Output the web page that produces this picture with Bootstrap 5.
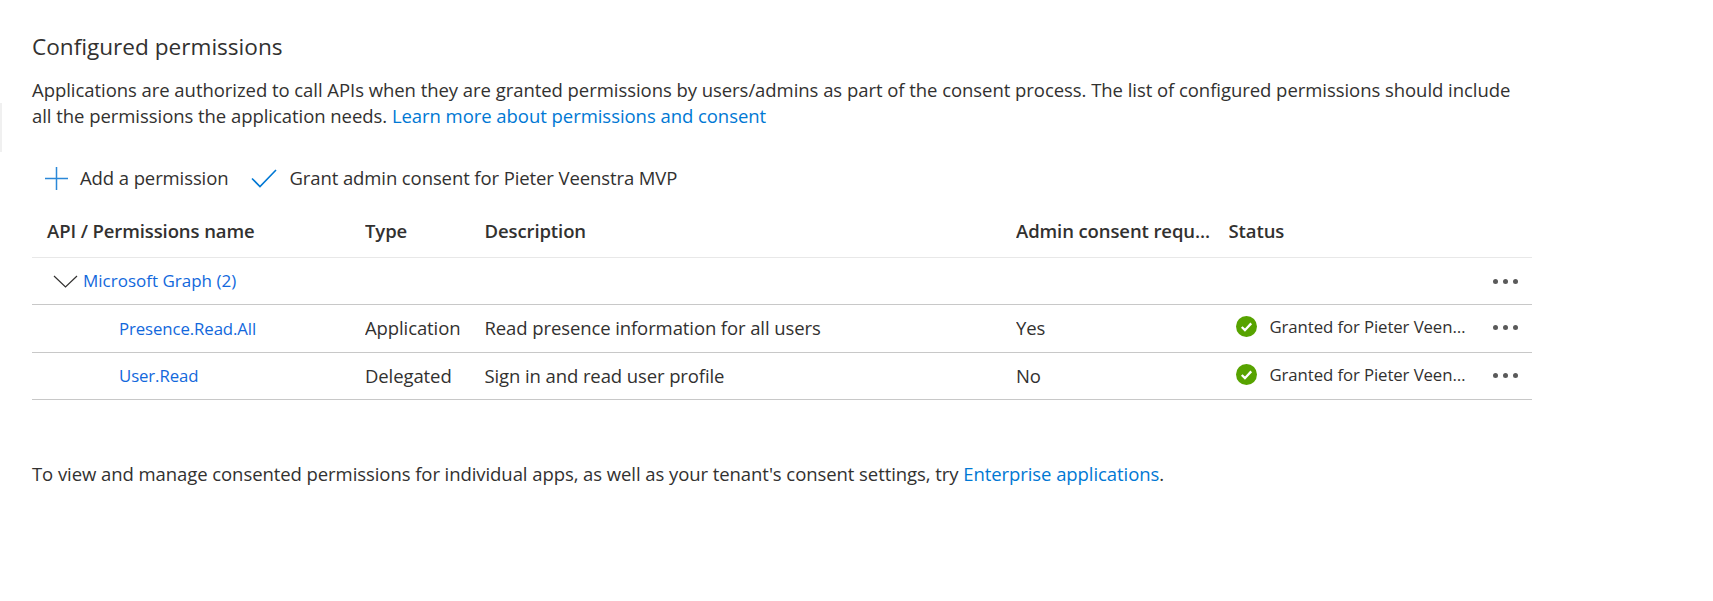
<!DOCTYPE html>
<html lang="en">
<head>
  <meta charset="UTF-8">
  <title>Configured permissions</title>
  <link href="https://cdn.jsdelivr.net/npm/bootstrap@5.3.0/dist/css/bootstrap.min.css" rel="stylesheet">
  <style>
    body { font-family: "Open Sans", "Noto Sans", sans-serif; font-size: 18.500px; color: #323130; background: #fff; overflow: hidden; }
    a { color: #0078d4; text-decoration: none; }
    .page-wrap { width: 1500px; margin-left: 32px; padding-top: 31px; }
    .page-title { font-size: 22.600px; font-weight: 400; line-height: 32px; margin: 0 0 14px; }
    .intro { line-height: 25.500px; margin: 0 0 28px; letter-spacing: -.05px; }
    .cmd-bar { height: 44px; padding-left: 13px; margin-bottom: 5px; letter-spacing: -.1px; }
    .cmd-item { gap: 12px; margin-right: 23px; }
    .perm-row { display: grid; grid-template-columns: 333px 119.500px 531.500px 212.500px 1fr 40px; align-items: center; letter-spacing: -.1px; }
    .perm-row > div { white-space: nowrap; overflow: hidden; }
    .perm-head { height: 53px; font-weight: 600; border-bottom: 1px solid #e8e8e8; }
    .perm-head > div:first-child { padding-left: 15px; }
    .perm-group { height: 47px; border-bottom: 1px solid #c8c8c8; padding-left: 21px; padding-right: 14px; font-size: 17px; }
    .perm-group svg { margin-right: 5px; }
    .perm-group a, .perm-name a { color: #1268dc; }
    .perm-item { height: 47.500px; border-bottom: 1px solid #c8c8c8; }
    .perm-item .perm-name { padding-left: 87px; font-size: 16.800px; }
    .perm-status { padding-left: 7px; padding-bottom: 3px; gap: 13px; }
    .status-text { font-size: 16.800px; width: 200px; overflow: hidden; text-overflow: ellipsis; white-space: nowrap; }
    .dots { gap: 5px; }
    .dots i { display: block; width: 5px; height: 5px; border-radius: 50%; background: #5a5a5a; }
    .dots-cell { padding-right: 14px; padding-bottom: 1px; }
    .footer-note { margin: 61px 0 0; letter-spacing: -.07px; line-height: 25.500px; }
    .side-mark { position: absolute; left: 0; top: 103px; width: 2px; height: 49px; background: #f0f0f0; }
  </style>
</head>
<body>
  <div class="side-mark"></div>
  <div class="page-wrap">
    <h2 class="page-title">Configured permissions</h2>
    <p class="intro">Applications are authorized to call APIs when they are granted permissions by users/admins as part of the consent process. The list of configured permissions should include all the permissions the application needs. <a href="#">Learn more about permissions and consent</a></p>

    <div class="cmd-bar d-flex align-items-center">
      <div class="cmd-item d-flex align-items-center">
        <svg width="23" height="23" viewBox="0 0 23 23"><path d="M11.500 0v23M0 11.500h23" stroke="#2b88d8" stroke-width="1.500" fill="none"/></svg>
        <span>Add a permission</span>
      </div>
      <div class="cmd-item d-flex align-items-center">
        <svg width="26" height="19" viewBox="0 0 26 19"><path d="M1 9.500l8 8L25 1" stroke="#0078d4" stroke-width="1.600" fill="none"/></svg>
        <span>Grant admin consent for Pieter Veenstra MVP</span>
      </div>
    </div>

    <div class="perm-row perm-head">
      <div>API / Permissions name</div><div>Type</div><div>Description</div><div>Admin consent requ...</div><div>Status</div><div></div>
    </div>

    <div class="perm-group d-flex align-items-center">
      <svg width="25" height="13" viewBox="0 0 25 13"><path d="M1 1l11.500 11L24 1" stroke="#323130" stroke-width="1.200" fill="none"/></svg>
      <a href="#">Microsoft Graph (2)</a>
      <span class="dots d-flex ms-auto"><i></i><i></i><i></i></span>
    </div>

    <div class="perm-row perm-item">
      <div class="perm-name"><a href="#">Presence.Read.All</a></div><div>Application</div><div>Read presence information for all users</div><div>Yes</div>
      <div class="perm-status d-flex align-items-center">
        <svg width="21" height="21" viewBox="0 0 20 20" class="flex-shrink-0"><circle cx="10" cy="10" r="10" fill="#57a300"/><path d="M5.500 10.500l3 3 6-6.500" stroke="#fff" stroke-width="2.200" fill="none"/></svg>
        <span class="status-text">Granted for Pieter Veenstra MVP</span>
      </div>
      <div class="dots-cell d-flex justify-content-end"><span class="dots d-flex"><i></i><i></i><i></i></span></div>
    </div>

    <div class="perm-row perm-item">
      <div class="perm-name"><a href="#">User.Read</a></div><div>Delegated</div><div>Sign in and read user profile</div><div>No</div>
      <div class="perm-status d-flex align-items-center">
        <svg width="21" height="21" viewBox="0 0 20 20" class="flex-shrink-0"><circle cx="10" cy="10" r="10" fill="#57a300"/><path d="M5.500 10.500l3 3 6-6.500" stroke="#fff" stroke-width="2.200" fill="none"/></svg>
        <span class="status-text">Granted for Pieter Veenstra MVP</span>
      </div>
      <div class="dots-cell d-flex justify-content-end"><span class="dots d-flex"><i></i><i></i><i></i></span></div>
    </div>

    <p class="footer-note">To view and manage consented permissions for individual apps, as well as your tenant's consent settings, try <a href="#">Enterprise applications</a>.</p>
  </div>
  <script src="https://cdn.jsdelivr.net/npm/bootstrap@5.3.0/dist/js/bootstrap.bundle.min.js"></script>
</body>
</html>
